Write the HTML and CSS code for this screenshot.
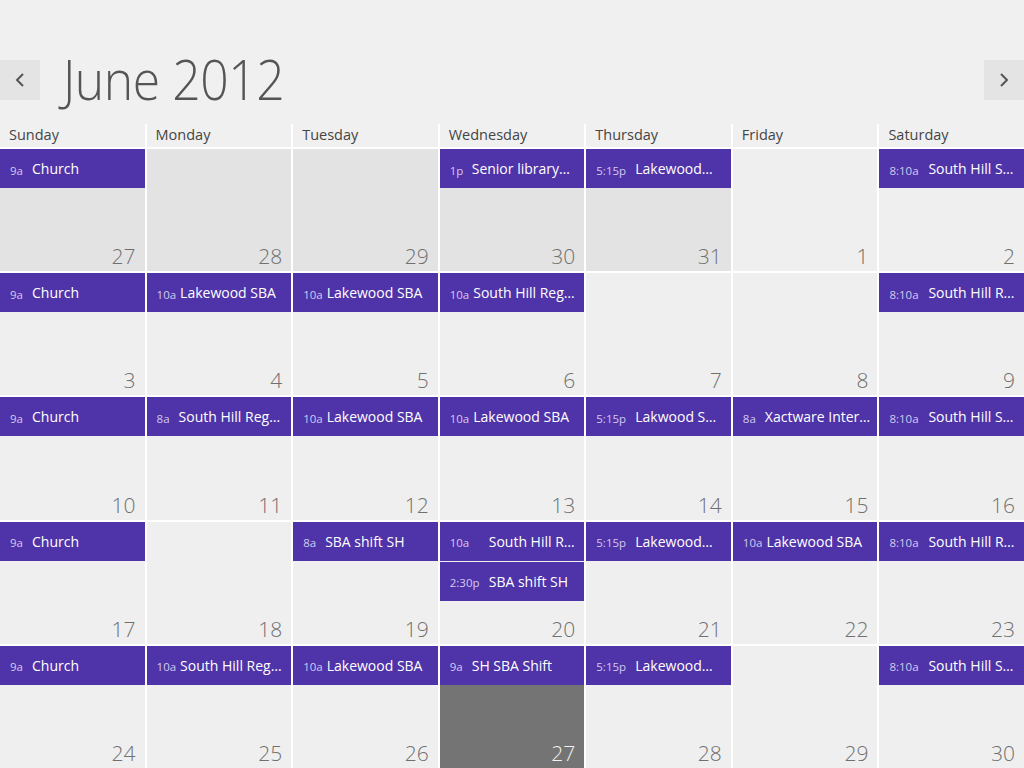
FILE: index.html
```html
<!DOCTYPE html>
<html>
<head>
<meta charset="utf-8">
<link rel="stylesheet" href="styles.css">
</head>
<body>
<div class="page">
  <header class="top">
    <button class="nav"><svg width="12" height="16" viewBox="0 0 12 16"><polyline points="9,2 3,8 9,14" fill="none" stroke="#555" stroke-width="2"/></svg></button>
    <h1 class="title">June 2012</h1>
    <button class="nav nav-right"><svg width="12" height="16" viewBox="0 0 12 16"><polyline points="3,2 9,8 3,14" fill="none" stroke="#555" stroke-width="2"/></svg></button>
  </header>
  <div class="grid">
    <div class="dow">Sunday</div>
    <div class="dow">Monday</div>
    <div class="dow">Tuesday</div>
    <div class="dow">Wednesday</div>
    <div class="dow">Thursday</div>
    <div class="dow">Friday</div>
    <div class="dow">Saturday</div>

    <div class="cell other"><div class="ev"><span class="t">9a</span><span class="n">Church</span></div><div class="num">27</div></div>
    <div class="cell other"><div class="num">28</div></div>
    <div class="cell other"><div class="num">29</div></div>
    <div class="cell other"><div class="ev"><span class="t">1p</span><span class="n">Senior library…</span></div><div class="num">30</div></div>
    <div class="cell other"><div class="ev"><span class="t tl">5:15p</span><span class="n">Lakewood…</span></div><div class="num">31</div></div>
    <div class="cell"><div class="num">1</div></div>
    <div class="cell"><div class="ev"><span class="t tl">8:10a</span><span class="n">South Hill S…</span></div><div class="num">2</div></div>

    <div class="cell"><div class="ev"><span class="t">9a</span><span class="n">Church</span></div><div class="num">3</div></div>
    <div class="cell"><div class="ev"><span class="t">10a</span><span class="n">Lakewood SBA</span></div><div class="num">4</div></div>
    <div class="cell"><div class="ev"><span class="t">10a</span><span class="n">Lakewood SBA</span></div><div class="num">5</div></div>
    <div class="cell"><div class="ev"><span class="t">10a</span><span class="n">South Hill Reg…</span></div><div class="num">6</div></div>
    <div class="cell"><div class="num">7</div></div>
    <div class="cell"><div class="num">8</div></div>
    <div class="cell"><div class="ev"><span class="t tl">8:10a</span><span class="n">South Hill R…</span></div><div class="num">9</div></div>

    <div class="cell"><div class="ev"><span class="t">9a</span><span class="n">Church</span></div><div class="num">10</div></div>
    <div class="cell"><div class="ev"><span class="t">8a</span><span class="n">South Hill Reg…</span></div><div class="num">11</div></div>
    <div class="cell"><div class="ev"><span class="t">10a</span><span class="n">Lakewood SBA</span></div><div class="num">12</div></div>
    <div class="cell"><div class="ev"><span class="t">10a</span><span class="n">Lakewood SBA</span></div><div class="num">13</div></div>
    <div class="cell"><div class="ev"><span class="t tl">5:15p</span><span class="n">Lakwood S…</span></div><div class="num">14</div></div>
    <div class="cell"><div class="ev"><span class="t">8a</span><span class="n">Xactware Inter…</span></div><div class="num">15</div></div>
    <div class="cell"><div class="ev"><span class="t tl">8:10a</span><span class="n">South Hill S…</span></div><div class="num">16</div></div>

    <div class="cell"><div class="ev"><span class="t">9a</span><span class="n">Church</span></div><div class="num">17</div></div>
    <div class="cell"><div class="num">18</div></div>
    <div class="cell"><div class="ev"><span class="t">8a</span><span class="n">SBA shift SH</span></div><div class="num">19</div></div>
    <div class="cell"><div class="ev"><span class="t tl">10a</span><span class="n">South Hill R…</span></div><div class="ev"><span class="t tl">2:30p</span><span class="n">SBA shift SH</span></div><div class="num">20</div></div>
    <div class="cell"><div class="ev"><span class="t tl">5:15p</span><span class="n">Lakewood…</span></div><div class="num">21</div></div>
    <div class="cell"><div class="ev"><span class="t">10a</span><span class="n">Lakewood SBA</span></div><div class="num">22</div></div>
    <div class="cell"><div class="ev"><span class="t tl">8:10a</span><span class="n">South Hill R…</span></div><div class="num">23</div></div>

    <div class="cell"><div class="ev"><span class="t">9a</span><span class="n">Church</span></div><div class="num">24</div></div>
    <div class="cell"><div class="ev"><span class="t">10a</span><span class="n">South Hill Reg…</span></div><div class="num">25</div></div>
    <div class="cell"><div class="ev"><span class="t">10a</span><span class="n">Lakewood SBA</span></div><div class="num">26</div></div>
    <div class="cell today"><div class="ev"><span class="t">9a</span><span class="n">SH SBA Shift</span></div><div class="num">27</div></div>
    <div class="cell"><div class="ev"><span class="t tl">5:15p</span><span class="n">Lakewood…</span></div><div class="num">28</div></div>
    <div class="cell"><div class="num">29</div></div>
    <div class="cell"><div class="ev"><span class="t tl">8:10a</span><span class="n">South Hill S…</span></div><div class="num">30</div></div>
  </div>
</div>
</body>
</html>
```

FILE: styles.css
```css
* { box-sizing: border-box; }
html, body {
  margin: 0;
  padding: 0;
  background: #f0f0f0;
}
body {
  font-family: "Open Sans", "Noto Sans", sans-serif;
  color: #444;
  overflow: hidden;
}
.page {
  width: 1024px;
  height: 768px;
  display: flex;
  flex-direction: column;
}
.top {
  height: 124px;
  padding-top: 60px;
  display: flex;
  align-items: flex-start;
}
.nav {
  width: 40px;
  height: 40px;
  border: 0;
  padding: 0;
  margin: 0;
  background: #e4e4e4;
  display: flex;
  align-items: center;
  justify-content: center;
}
.nav-right {
  margin-left: auto;
}
.title {
  margin: -2px 0 0 23px;
  font-size: 56px;
  line-height: 40px;
  font-weight: 300;
  color: #555;
  letter-spacing: -0.5px;
  white-space: nowrap;
  transform: scaleX(0.89);
  transform-origin: left center;
}
.grid {
  flex: 1;
  display: grid;
  grid-template-columns: repeat(7, 1fr);
  grid-template-rows: 23px repeat(5, 1fr);
  gap: 2px;
  background: #fff;
}
.dow {
  background: #f0f0f0;
  font-size: 14.5px;
  line-height: 20px;
  padding: 1px 0 0 9px;
  color: #444;
}
.cell {
  background: #efefef;
  display: flex;
  flex-direction: column;
  gap: 1px;
  overflow: hidden;
}
.cell.other {
  background: #e3e3e3;
}
.cell.today {
  background: #747474;
}
.ev {
  height: 39px;
  flex: none;
  background: #4f33a8;
  display: flex;
  align-items: center;
  padding-left: 10px;
  white-space: nowrap;
  overflow: hidden;
}
.t {
  font-size: 11.5px;
  color: #d3cbee;
  min-width: 18px;
  margin-right: 4px;
  padding-top: 3px;
}
.t.tl {
  min-width: 35px;
}
.n {
  font-size: 14px;
  color: #fff;
}
.num {
  margin-top: auto;
  align-self: flex-end;
  font-size: 21px;
  line-height: 22px;
  font-weight: 300;
  color: #707070;
  padding: 0 9px 4px 0;
}
.today .num {
  color: #f2f2f2;
}
```
